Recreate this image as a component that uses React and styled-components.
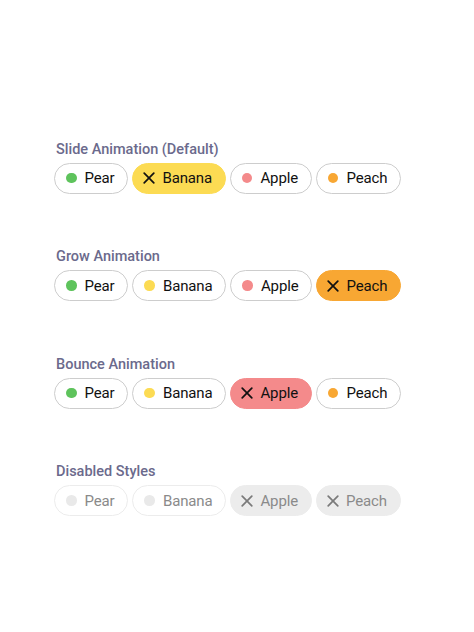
import React from "react";
import styled, { createGlobalStyle } from "styled-components";

const Global = createGlobalStyle`
  html, body { margin: 0; padding: 0; background: #ffffff; }
  body { font-family: Roboto, "Noto Sans", sans-serif; }
`;

const Page = styled.div`
  display: flex;
  flex-direction: column;
  gap: 52.5px;
  padding: 138.5px 0 0 54px;
`;

const Section = styled.section`
  display: flex;
  flex-direction: column;
  gap: 3px;
`;

const Label = styled.div`
  font-size: 14.5px;
  line-height: 20px;
  padding-top: 1px;
  font-weight: 500;
  color: #6b6a8c;
  padding-left: 2px;
`;

const Row = styled.div`
  display: flex;
  gap: 4px;
`;

const Chip = styled.div`
  box-sizing: border-box;
  height: 31px;
  display: flex;
  align-items: center;
  gap: ${(p) => (p.$selected ? 7 : 8)}px;
  padding: 0 13px 0 ${(p) => (p.$selected ? 10 : 11)}px;
  border-radius: 16px;
  border: 1px solid ${(p) =>
    p.$selected ? p.$bg : p.$disabled ? "#ececec" : "#cdcdcd"};
  background: ${(p) => (p.$selected ? p.$bg : "#ffffff")};
  color: ${(p) => (p.$disabled ? "#8a8a8a" : "#111111")};
  font-size: 15px;
  letter-spacing: -0.15px;
  line-height: 20px;
`;

const Dot = styled.span`
  width: 10.5px;
  height: 10.5px;
  border-radius: 50%;
  background: ${(p) => p.$color};
  flex: none;
`;

const Cross = ({ color }) => (
  <svg width="12" height="12" viewBox="0 0 12 12" style={{ flex: "none" }}>
    <path d="M1.2 1.2 L10.8 10.8 M10.8 1.2 L1.2 10.8" stroke={color} strokeWidth="1.7" strokeLinecap="round" />
  </svg>
);

const fruits = [
  { name: "Pear", color: "#5ec35c" },
  { name: "Banana", color: "#fcdb53" },
  { name: "Apple", color: "#f48a8b" },
  { name: "Peach", color: "#f8a733" },
];

const sections = [
  { title: "Slide Animation (Default)", selected: ["Banana"] },
  { title: "Grow Animation", selected: ["Peach"] },
  { title: "Bounce Animation", selected: ["Apple"] },
  { title: "Disabled Styles", selected: ["Apple", "Peach"], disabled: true },
];

export default function App() {
  return (
    <>
      <Global />
      <Page>
        {sections.map((s) => (
          <Section key={s.title}>
            <Label>{s.title}</Label>
            <Row>
              {fruits.map((f) => {
                const sel = s.selected.includes(f.name);
                const bg = s.disabled ? "#ececec" : f.color;
                return (
                  <Chip key={f.name} $selected={sel} $bg={bg} $disabled={s.disabled}>
                    {sel ? (
                      <Cross color={s.disabled ? "#7a7a7a" : "#111"} />
                    ) : (
                      <Dot $color={s.disabled ? "#e9e9e9" : f.color} />
                    )}
                    {f.name}
                  </Chip>
                );
              })}
            </Row>
          </Section>
        ))}
      </Page>
    </>
  );
}
